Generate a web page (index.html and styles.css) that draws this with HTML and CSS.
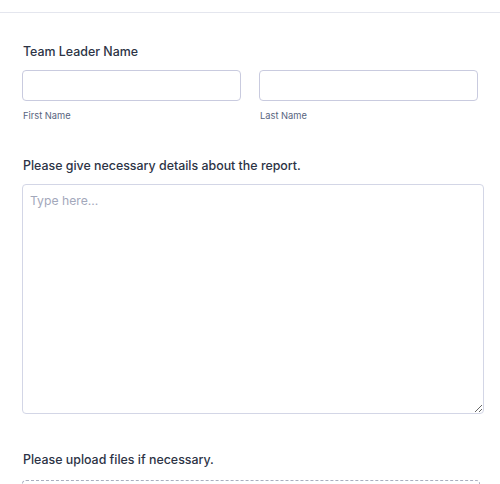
FILE: index.html
```html
<!DOCTYPE html>
<html>
<head>
<meta charset="utf-8">
<link rel="stylesheet" href="styles.css">
</head>
<body>
<div class="topbar"></div>
<form class="form">
  <div class="field name-field">
    <label class="label">Team Leader Name</label>
    <div class="name-grid">
      <div class="sub">
        <input class="input" type="text">
        <span class="sublabel">First Name</span>
      </div>
      <div class="sub">
        <input class="input" type="text">
        <span class="sublabel">Last Name</span>
      </div>
    </div>
  </div>
  <div class="field details-field">
    <label class="label">Please give necessary details about the report.</label>
    <textarea class="textarea" placeholder="Type here..."></textarea>
  </div>
  <div class="field upload-field">
    <label class="label">Please upload files if necessary.</label>
    <div class="dropzone"></div>
  </div>
</form>
</body>
</html>
```
FILE: styles.css
```css
* { box-sizing: border-box; }
html, body { margin: 0; padding: 0; background: #ffffff; overflow: hidden; }
body {
  font-family: Inter, "Noto Sans", sans-serif;
  color: #2c3345;
  width: 500px;
  height: 484px;
}
.topbar {
  height: 13px;
  border-bottom: 1px solid #e4e6ee;
}
.form {
  display: flex;
  flex-direction: column;
  padding: 0 22px 0 23px;
}
.field {
  display: flex;
  flex-direction: column;
}
.label {
  font-size: 12.4px;
  line-height: 20px;
  font-weight: 500;
  color: #2c3345;
}
.name-field { margin-top: 29px; }
.name-grid {
  display: grid;
  grid-template-columns: 219px 219px;
  column-gap: 18px;
  margin-top: 8px;
  margin-left: -1px;
}
.sub { display: flex; flex-direction: column; }
.input {
  height: 31px;
  width: 100%;
  border: 1px solid #c9cbdf;
  border-radius: 4px;
  background: #fff;
  margin: 0;
  padding: 0 8px;
}
.sublabel {
  font-size: 9.3px;
  line-height: 14px;
  color: #57647e;
  margin-top: 8px;
  padding-left: 1px;
}
.details-field { margin-top: 33px; }
.textarea {
  margin-top: 8px;
  margin-left: -1px;
  width: 462px;
  height: 230px;
  border: 1px solid #d3d6e6;
  border-radius: 4px;
  padding: 6px 7px;
  font-family: Inter, "Noto Sans", sans-serif;
  font-size: 12.2px;
  line-height: 20px;
  color: #2c3345;
  resize: both;
}
.textarea::placeholder { color: #a3a8bb; }
.upload-field { margin-top: 36px; }
.dropzone {
  margin-top: 10px;
  margin-left: -1px;
  width: 458px;
  height: 60px;
  border: 1px dashed #a8adbf;
  border-radius: 4px;
}
```
